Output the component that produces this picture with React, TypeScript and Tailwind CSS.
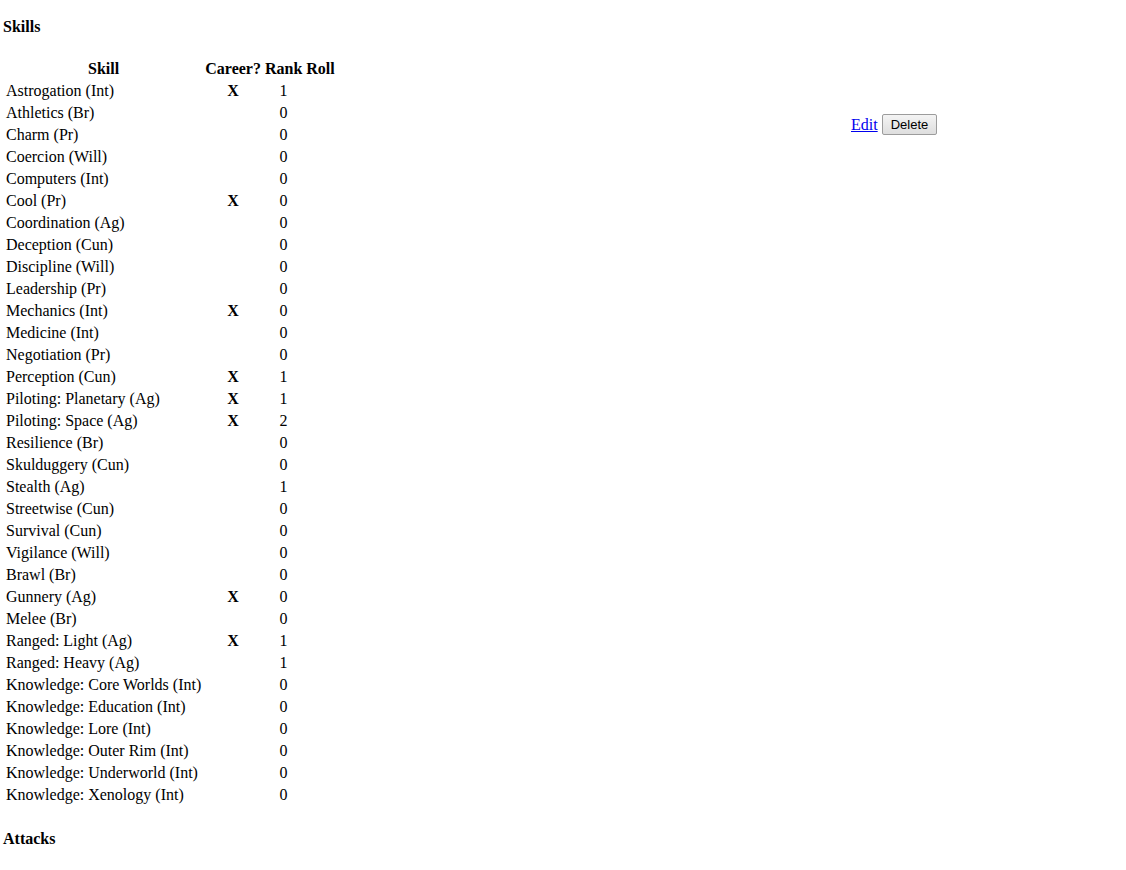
import React from "react";

type Skill = { name: string; career: boolean; rank: number };

const skills: Skill[] = [
  { name: "Astrogation (Int)", career: true, rank: 1 },
  { name: "Athletics (Br)", career: false, rank: 0 },
  { name: "Charm (Pr)", career: false, rank: 0 },
  { name: "Coercion (Will)", career: false, rank: 0 },
  { name: "Computers (Int)", career: false, rank: 0 },
  { name: "Cool (Pr)", career: true, rank: 0 },
  { name: "Coordination (Ag)", career: false, rank: 0 },
  { name: "Deception (Cun)", career: false, rank: 0 },
  { name: "Discipline (Will)", career: false, rank: 0 },
  { name: "Leadership (Pr)", career: false, rank: 0 },
  { name: "Mechanics (Int)", career: true, rank: 0 },
  { name: "Medicine (Int)", career: false, rank: 0 },
  { name: "Negotiation (Pr)", career: false, rank: 0 },
  { name: "Perception (Cun)", career: true, rank: 1 },
  { name: "Piloting: Planetary (Ag)", career: true, rank: 1 },
  { name: "Piloting: Space (Ag)", career: true, rank: 2 },
  { name: "Resilience (Br)", career: false, rank: 0 },
  { name: "Skulduggery (Cun)", career: false, rank: 0 },
  { name: "Stealth (Ag)", career: false, rank: 1 },
  { name: "Streetwise (Cun)", career: false, rank: 0 },
  { name: "Survival (Cun)", career: false, rank: 0 },
  { name: "Vigilance (Will)", career: false, rank: 0 },
  { name: "Brawl (Br)", career: false, rank: 0 },
  { name: "Gunnery (Ag)", career: true, rank: 0 },
  { name: "Melee (Br)", career: false, rank: 0 },
  { name: "Ranged: Light (Ag)", career: true, rank: 1 },
  { name: "Ranged: Heavy (Ag)", career: false, rank: 1 },
  { name: "Knowledge: Core Worlds (Int)", career: false, rank: 0 },
  { name: "Knowledge: Education (Int)", career: false, rank: 0 },
  { name: "Knowledge: Lore (Int)", career: false, rank: 0 },
  { name: "Knowledge: Outer Rim (Int)", career: false, rank: 0 },
  { name: "Knowledge: Underworld (Int)", career: false, rank: 0 },
  { name: "Knowledge: Xenology (Int)", career: false, rank: 0 },
];

export default function App() {
  return (
    <div className="min-h-screen bg-white text-black px-[3px] text-[16px] leading-[18px] font-['Liberation_Serif',serif]">
      <h4 className="pt-[18px] mb-[21px] font-bold">Skills</h4>

      <div className="grid grid-cols-[848px_auto]">
        <table className="border-separate border-spacing-[2px] self-start justify-self-start w-max">
          <thead>
            <tr>
              <th className="p-px text-center font-bold">Skill</th>
              <th className="p-px text-center font-bold">Career?</th>
              <th className="p-px text-center font-bold">Rank</th>
              <th className="p-px text-center font-bold">Roll</th>
            </tr>
          </thead>
          <tbody>
            {skills.map((s) => (
              <tr key={s.name}>
                <td className="p-px">{s.name}</td>
                <td className="p-px text-center font-bold">{s.career ? "X" : ""}</td>
                <td className="p-px text-center">{s.rank}</td>
                <td className="p-px"></td>
              </tr>
            ))}
          </tbody>
        </table>

        <div className="pt-[57px] flex items-center gap-[4px] self-start">
          <a href="#" className="text-[#0000ee] underline">
            Edit
          </a>
          <button className="h-[21px] px-[8px] rounded-[2px] border border-[#9c9c9c] bg-gradient-to-b from-[#f4f4f4] to-[#dedede] text-[13px] leading-none text-black font-['Liberation_Sans',Arial,sans-serif]">
            Delete
          </button>
        </div>
      </div>

      <h4 className="mt-[23px] font-bold">Attacks</h4>
    </div>
  );
}
